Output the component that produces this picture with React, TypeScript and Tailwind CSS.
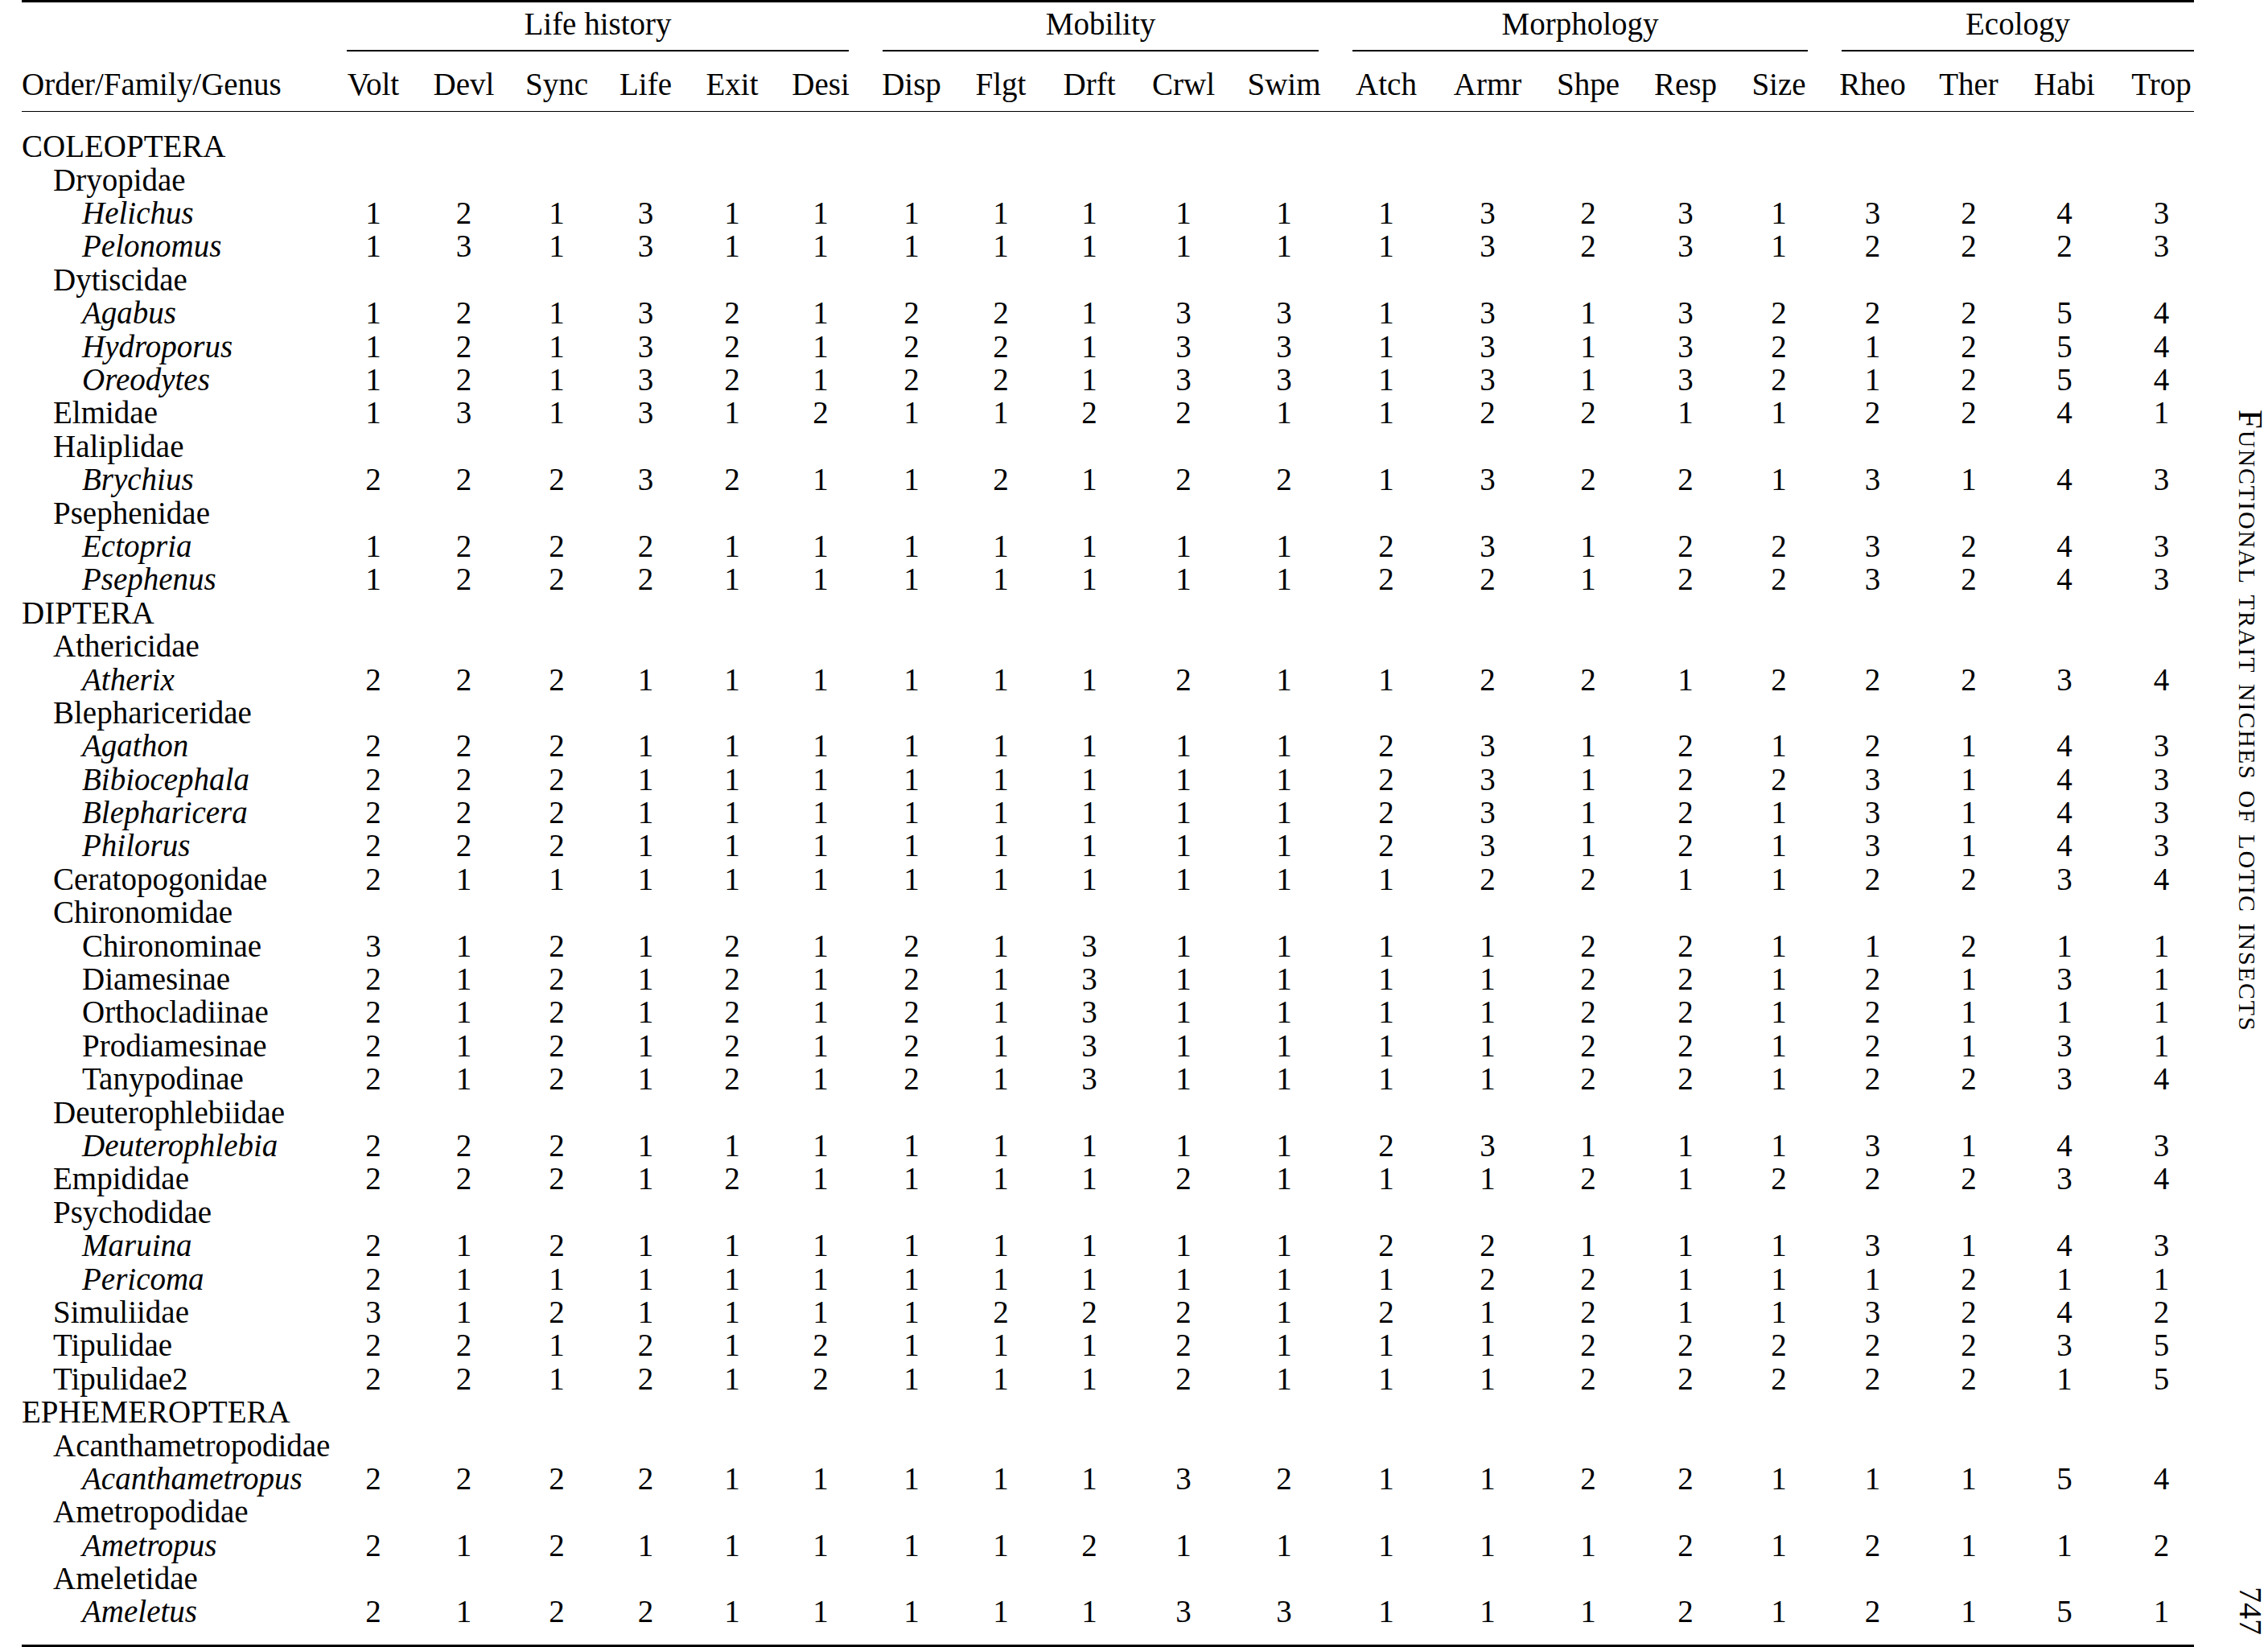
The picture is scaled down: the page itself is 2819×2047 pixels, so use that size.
import React from "react";

type Row = { name: string; kind: "o" | "f" | "g" | "s"; v?: string };

const rows: Row[] = [
  { name: "COLEOPTERA", kind: "o" },
  { name: "Dryopidae", kind: "f" },
  { name: "Helichus", kind: "g", v: "12131111111132313243" },
  { name: "Pelonomus", kind: "g", v: "13131111111132312223" },
  { name: "Dytiscidae", kind: "f" },
  { name: "Agabus", kind: "g", v: "12132122133131322254" },
  { name: "Hydroporus", kind: "g", v: "12132122133131321254" },
  { name: "Oreodytes", kind: "g", v: "12132122133131321254" },
  { name: "Elmidae", kind: "f", v: "13131211221122112241" },
  { name: "Haliplidae", kind: "f" },
  { name: "Brychius", kind: "g", v: "22232112122132213143" },
  { name: "Psephenidae", kind: "f" },
  { name: "Ectopria", kind: "g", v: "12221111111231223243" },
  { name: "Psephenus", kind: "g", v: "12221111111221223243" },
  { name: "DIPTERA", kind: "o" },
  { name: "Athericidae", kind: "f" },
  { name: "Atherix", kind: "g", v: "22211111121122122234" },
  { name: "Blephariceridae", kind: "f" },
  { name: "Agathon", kind: "g", v: "22211111111231212143" },
  { name: "Bibiocephala", kind: "g", v: "22211111111231223143" },
  { name: "Blepharicera", kind: "g", v: "22211111111231213143" },
  { name: "Philorus", kind: "g", v: "22211111111231213143" },
  { name: "Ceratopogonidae", kind: "f", v: "21111111111122112234" },
  { name: "Chironomidae", kind: "f" },
  { name: "Chironominae", kind: "s", v: "31212121311112211211" },
  { name: "Diamesinae", kind: "s", v: "21212121311112212131" },
  { name: "Orthocladiinae", kind: "s", v: "21212121311112212111" },
  { name: "Prodiamesinae", kind: "s", v: "21212121311112212131" },
  { name: "Tanypodinae", kind: "s", v: "21212121311112212234" },
  { name: "Deuterophlebiidae", kind: "f" },
  { name: "Deuterophlebia", kind: "g", v: "22211111111231113143" },
  { name: "Empididae", kind: "f", v: "22212111121112122234" },
  { name: "Psychodidae", kind: "f" },
  { name: "Maruina", kind: "g", v: "21211111111221113143" },
  { name: "Pericoma", kind: "g", v: "21111111111122111211" },
  { name: "Simuliidae", kind: "f", v: "31211112221212113242" },
  { name: "Tipulidae", kind: "f", v: "22121211121112222235" },
  { name: "Tipulidae2", kind: "f", v: "22121211121112222215" },
  { name: "EPHEMEROPTERA", kind: "o" },
  { name: "Acanthametropodidae", kind: "f" },
  { name: "Acanthametropus", kind: "g", v: "22221111132112211154" },
  { name: "Ametropodidae", kind: "f" },
  { name: "Ametropus", kind: "g", v: "21211111211111212112" },
  { name: "Ameletidae", kind: "f" },
  { name: "Ameletus", kind: "g", v: "21221111133111212151" },
];

const headers = [
  "Volt", "Devl", "Sync", "Life", "Exit", "Desi",
  "Disp", "Flgt", "Drft", "Crwl", "Swim",
  "Atch", "Armr", "Shpe", "Resp", "Size",
  "Rheo", "Ther", "Habi", "Trop",
];

const gridCols =
  "grid grid-cols-[383px_108px_117px_114px_107px_108px_112px_114px_108px_112px_122px_128px_126px_126px_124px_118px_114px_119px_120px_118px_102px]";

function NameCell({ r }: { r: Row }) {
  const cls =
    r.kind === "o"
      ? "pl-0"
      : r.kind === "f"
      ? "pl-[39px]"
      : r.kind === "g"
      ? "pl-[75px] italic"
      : "pl-[75px]";
  return <div className={`${cls} whitespace-nowrap text-left`}>{r.name}</div>;
}

export default function App() {
  return (
    <div className="w-[2819px] h-[2047px] overflow-hidden bg-white text-black flex font-['Liberation_Serif',serif] text-[39px] leading-[41.4px]">
      <div className="ml-[27px] w-[2700px] flex flex-col">
        <div className="h-[3px] bg-black" />
        {/* group headers */}
        <div className="grid grid-cols-[383px_666px_584px_608px_459px] pt-[6px]">
          <div />
          {[
            { t: "Life history", c: "mx-[21px]" },
            { t: "Mobility", c: "mx-[21px]" },
            { t: "Morphology", c: "mx-[21px]" },
            { t: "Ecology", c: "ml-[21px] mr-0" },
          ].map((g) => (
            <div key={g.t} className="flex flex-col">
              <div className={`${g.c} h-[41.4px] text-center whitespace-nowrap`}>{g.t}</div>
              <div className={`${g.c} mt-[12px] h-[2px] bg-black`} />
            </div>
          ))}
        </div>
        {/* column headers */}
        <div className={`${gridCols} mt-[20px] h-[41.4px]`}>
          <div className="whitespace-nowrap">Order/Family/Genus</div>
          {headers.map((h, i) => (
            <div
              key={h}
              className={`${i === headers.length - 1 ? "pl-[21px]" : ""} text-center whitespace-nowrap`}
            >
              {h}
            </div>
          ))}
        </div>
        <div className="mt-[12px] h-[1.5px] bg-black" />
        {/* body */}
        <div className="mt-[22px] flex flex-col">
          {rows.map((r, idx) => (
            <div key={idx} className={`${gridCols} h-[41.4px]`}>
              <NameCell r={r} />
              {headers.map((h, i) => (
                <div
                  key={h}
                  className={`${i === headers.length - 1 ? "pl-[21px]" : ""} text-center`}
                >
                  {r.v ? r.v[i] : ""}
                </div>
              ))}
            </div>
          ))}
        </div>
        <div className="mt-[20px] h-[3px] bg-black" />
      </div>
      <div className="w-[92px] h-[2047px] pl-[48px] flex flex-col items-center">
        <div className="mt-[509px] [writing-mode:vertical-rl] text-[43px] leading-none tracking-[1.9px] [font-variant:small-caps] whitespace-nowrap">
          Functional trait niches of lotic insects
        </div>
        <div className="mt-auto mb-[15px] [writing-mode:vertical-rl] text-[40px] leading-none">
          747
        </div>
      </div>
    </div>
  );
}
